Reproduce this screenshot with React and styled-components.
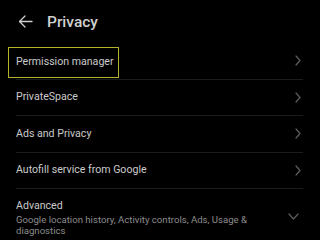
import React from 'react';
import styled, { createGlobalStyle } from 'styled-components';

const GlobalStyle = createGlobalStyle`
    html, body {
        margin: 0;
        padding: 0;
        background: #000;
    }
    body {
        font-family: Roboto, "Noto Sans", sans-serif;
        -webkit-font-smoothing: antialiased;
    }
`;

const Screen = styled.div`
    width: 320px;
    height: 240px;
    overflow: hidden;
    background: #000;
    color: #d2d2d2;
`;

const Header = styled.div`
    height: 43px;
    display: flex;
    align-items: center;
    padding-left: 18px;
    gap: 14px;
`;

const Title = styled.h1`
    margin: 0;
    font-size: 15.5px;
    font-weight: 500;
    color: #d0d0d0;
`;

const List = styled.div`
    padding: 0 17px 0 16px;
`;

const Row = styled.div`
    display: flex;
    align-items: ${props => (props.$tall ? 'flex-start' : 'center')};
    justify-content: space-between;
    min-height: 36.5px;
    padding: ${props => (props.$tall ? '10px 0 6px' : '0')};
    border-bottom: ${props => (props.$last ? 'none' : '1px solid #1c1c1c')};
    box-sizing: border-box;
`;

const Label = styled.span`
    font-size: 10.6px;
    line-height: 14px;
    color: #cbcbcb;
    padding: ${props => (props.$focused ? '7.5px 4px 7.5px 7px' : '0')};
    margin-left: ${props => (props.$focused ? '-8px' : '0')};
    margin-top: ${props => (props.$focused ? '3px' : '0')};
    border: ${props => (props.$focused ? '1.5px solid #b4b42a' : 'none')};
`;

const TextBlock = styled.div`
    display: flex;
    flex-direction: column;
    max-width: 240px;
`;

const Sub = styled.span`
    font-size: 9.6px;
    line-height: 11px;
    color: #8c8c8c;
    margin-top: 1px;
`;

const Chevron = styled.svg`
    flex: none;
    margin-right: ${props => (props.$down ? '4px' : '2px')};
    margin-top: ${props => (props.$down ? '14px' : '0')};
`;

const BackArrow = () => (
    <svg width="15" height="13" viewBox="0 0 15 13" fill="none">
        <path d="M14 6.5H1.5M7 1L1.5 6.5L7 12" stroke="#cfcfcf" strokeWidth="1.3" strokeLinecap="round" strokeLinejoin="round" />
    </svg>
);

const RightChevron = () => (
    <Chevron width="6" height="11" viewBox="0 0 6 11" fill="none">
        <path d="M1 1L5 5.5L1 10" stroke="#5e5e5e" strokeWidth="1.2" strokeLinecap="round" strokeLinejoin="round" />
    </Chevron>
);

const DownChevron = () => (
    <Chevron $down width="11" height="7" viewBox="0 0 11 7" fill="none">
        <path d="M1 1L5.5 6L10 1" stroke="#5e5e5e" strokeWidth="1.2" strokeLinecap="round" strokeLinejoin="round" />
    </Chevron>
);

const items = [
    { label: 'Permission manager', focused: true },
    { label: 'PrivateSpace' },
    { label: 'Ads and Privacy' },
    { label: 'Autofill service from Google' },
];

const App = () => (
    <Screen>
        <GlobalStyle />
        <Header>
            <BackArrow />
            <Title>Privacy</Title>
        </Header>
        <List>
            {items.map(item => (
                <Row key={item.label}>
                    <Label $focused={item.focused}>{item.label}</Label>
                    <RightChevron />
                </Row>
            ))}
            <Row $tall $last>
                <TextBlock>
                    <Label>Advanced</Label>
                    <Sub>Google location history, Activity controls, Ads, Usage &amp; diagnostics</Sub>
                </TextBlock>
                <DownChevron />
            </Row>
        </List>
    </Screen>
);

export default App;
